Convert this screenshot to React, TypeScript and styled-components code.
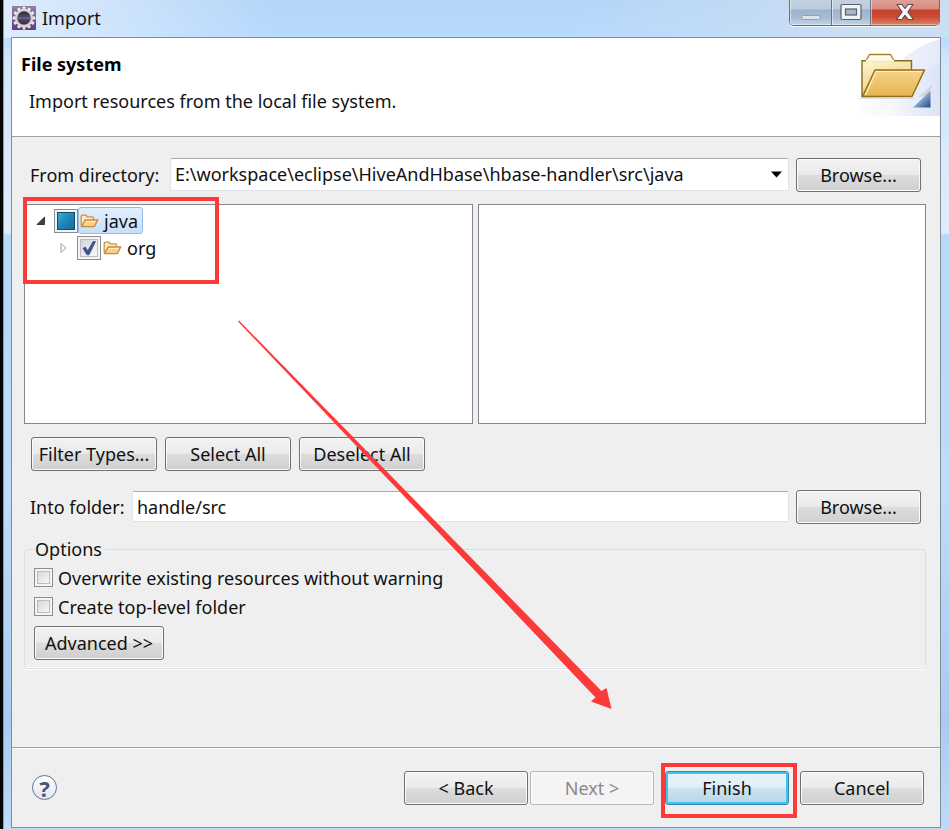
import React, { useEffect, useRef, useState } from "react";
import styled, { createGlobalStyle, css } from "styled-components";

const GlobalStyle = createGlobalStyle`
  * { box-sizing: border-box; }
  html, body { margin: 0; padding: 0; }
  body, button, input, select {
    font-family: "Noto Sans", "Open Sans", sans-serif;
    font-size: 18px;
    line-height: 24px;
    color: #111;
  }
`;

const Desktop = styled.div`
  min-height: 100vh;
  padding-left: 3px;
  background: #050505;
  display: flex;
`;

const Window = styled.div`
  position: relative;
  flex: 1;
  min-width: 0;
  display: flex;
  flex-direction: column;
  padding: 0 8px 0 7px;
  border-left: 1px solid #8d9cab;
  background:
    linear-gradient(100deg, rgba(235, 243, 252, 0.75) 0, rgba(235, 243, 252, 0.5) 100px, rgba(235, 243, 252, 0) 270px) top / 100% 38px no-repeat,
    linear-gradient(90deg, rgba(255, 255, 255, 0) 60%, rgba(206, 223, 240, 0.9) 92%) top / 100% 38px no-repeat,
    linear-gradient(180deg, #b3d5f8 0, #b9daff 38px, #d3e6fa 60px, #dfecfa 233px, #b7dafb 235px, #bcdcfb 500px, #a9cbef 720px, #bcdcfb 829px);
`;

const TitleBar = styled.header`
  height: 37px;
  display: flex;
  align-items: flex-start;
  justify-content: space-between;
`;

const Title = styled.div`
  display: flex;
  align-items: center;
  gap: 6px;
  height: 35px;
  padding-left: 1px;
`;

const Caption = styled.div`
  display: flex;
  height: 26px;
  margin-right: 1px;
  border: 1px solid #5d7086;
  border-top: 0;
  border-radius: 0 0 5px 5px;
  overflow: hidden;
  box-shadow: 0 1px 1px rgba(255, 255, 255, 0.8);
`;

const CaptionButton = styled.button<{ $w: number; $close?: boolean }>`
  width: ${(p) => p.$w}px;
  padding: 0;
  border: 0;
  border-left: 1px solid #63748a;
  box-shadow: inset 1px 0 0 rgba(255, 255, 255, 0.5), inset 0 -1px 0 rgba(255, 255, 255, 0.4);
  display: flex;
  align-items: center;
  justify-content: center;
  background: ${(p) =>
    p.$close
      ? "linear-gradient(#dfa198 0, #d98a7e 9px, #c4412c 10px, #cb4b32 17px, #d98468 25px)"
      : "linear-gradient(#c3d1e1 0, #bccbdd 9px, #9db2cb 10px, #a8bdd5 18px, #c2d5e9 25px)"};
  &:first-child { border-left: 0; }
`;

const Client = styled.main`
  flex: 1;
  display: flex;
  flex-direction: column;
  margin-bottom: 1px;
  border: 1px solid #7f8d9c;
  background: #efefef;
`;

const Banner = styled.section`
  height: 99px;
  display: flex;
  justify-content: space-between;
  background: #fff;
  border-bottom: 1px solid #a0a0a0;
`;

const BannerText = styled.div`
  padding: 14px 0 0 9px;
  h1 { margin: 0; font-size: 18px; line-height: 24px; font-weight: 700; color: #000; }
  p { margin: 13px 0 0 8px; }
`;

const Body = styled.div`
  flex: 1;
  padding: 21px 14px 20px 12px;
`;

const FieldRow = styled.div`
  display: flex;
  align-items: center;
  height: 33px;
  padding: 0 5px 0 6px;
`;

const FieldLabel = styled.label<{ $w: number }>`
  width: ${(p) => p.$w}px;
  flex: none;
  white-space: nowrap;
`;

const fieldBox = css`
  width: 100%;
  border: 1px solid #e0e3ea;
  border-top-color: #abadb3;
  border-radius: 2px;
  background: #fff;
  outline: 0;
`;

const ComboWrap = styled.div`
  position: relative;
  flex: 1;
  min-width: 0;
  margin-right: 7px;
  svg { position: absolute; right: 7px; top: 13px; pointer-events: none; }
`;

const Combo = styled.select`
  ${fieldBox}
  appearance: none;
  display: block;
  height: 33px;
  padding: 0 24px 2px 4px;
`;

const TextField = styled.input`
  ${fieldBox}
  flex: 1;
  min-width: 0;
  height: 31px;
  margin-right: 7px;
  padding: 0 4px;
`;

const Button = styled.button<{ $w: number; $primary?: boolean }>`
  width: ${(p) => p.$w}px;
  height: 34px;
  flex: none;
  padding: 0;
  white-space: nowrap;
  border: 1px solid #707070;
  border-radius: 3px;
  box-shadow: inset 0 0 0 1px #fbfbfb;
  background: linear-gradient(#f2f2f2 0, #ebebeb 48%, #dddddd 50%, #cfcfcf 100%);
  ${(p) =>
    p.$primary &&
    css`
      border-color: #3c7fb1;
      box-shadow: inset 0 0 0 2px #3fc3ef;
      background: linear-gradient(#eaf4fa 0, #dfeff7 48%, #cbe3ef 50%, #b7d6e6 100%);
    `}
  &:disabled {
    color: #8a8a8a;
    border-color: #b5b8ba;
    background: #f4f4f4;
  }
`;

const Panels = styled.div`
  display: grid;
  grid-template-columns: 1fr 1fr;
  gap: 5px;
  margin-top: 13px;
`;

const Panel = styled.div`
  position: relative;
  height: 220px;
  border: 1px solid #828790;
  background: #fff;
`;

const Tree = styled.ul`
  list-style: none;
  margin: 0;
  padding: 2px 0 0 11px;
  ul { padding: 0 0 0 23px; margin: 0; list-style: none; }
`;

const TreeRow = styled.div`
  display: flex;
  align-items: center;
  height: 27px;
`;

const Expander = styled.button`
  width: 18px;
  height: 24px;
  padding: 0;
  border: 0;
  background: none;
  display: flex;
  align-items: center;
`;

const TreeLabel = styled.label<{ $selected?: boolean }>`
  display: flex;
  align-items: center;
  gap: 5px;
  height: 27px;
  padding: 0 4px 0 1px;
  border: 1px solid ${(p) => (p.$selected ? "#98bce8" : "transparent")};
  border-radius: 3px;
  background: ${(p) => (p.$selected ? "linear-gradient(#e2effd, #c7dffb)" : "none")};
`;

const CheckHolder = styled.span<{ $size: number }>`
  position: relative;
  flex: none;
  width: ${(p) => p.$size}px;
  height: ${(p) => p.$size}px;
  svg { position: absolute; inset: 0; pointer-events: none; }
`;

const CheckInput = styled.input`
  appearance: none;
  display: block;
  width: 100%;
  height: 100%;
  margin: 0;
  border: 1px solid #8b8d90;
  box-shadow: inset 0 0 0 2px #f4f4f4, inset 0 0 0 3px #b9bdc3;
  background: linear-gradient(135deg, #cbcfd5, #f6f6f6 80%);
  &:indeterminate {
    box-shadow: inset 0 0 0 2px #f4f4f4, inset 0 0 0 3px #164a6a;
    background: linear-gradient(135deg, #45bbe0, #1d86b8 50%, #146590);
  }
`;

const ButtonRow = styled.div`
  display: flex;
  gap: 8px;
  margin: 13px 0 19px;
  padding-left: 7px;
`;

const Options = styled.fieldset`
  margin: 14px 0 0;
  min-width: 0;
  padding: 2px 9px 8px 9px;
  border: 1px solid #d5dfe5;
  border-radius: 4px;
  box-shadow: inset 0 -1px 0 #fff, 0 1px 0 #fff;
  legend { padding: 0 3px 0 1px; line-height: 24px; }
`;

const OptionRow = styled.label`
  display: flex;
  align-items: center;
  gap: 5px;
  width: fit-content;
  height: 29px;
`;

const AdvancedRow = styled.div`
  display: flex;
  padding-top: 5px;
`;

const Footer = styled.footer`
  display: flex;
  align-items: center;
  justify-content: space-between;
  height: 80px;
  padding: 0 16px 0 20px;
  border-top: 1px solid #a0a0a0;
  box-shadow: inset 0 1px 0 #fff;
`;

const HelpButton = styled.button`
  width: 25px;
  height: 25px;
  padding: 0;
  border: 1px solid #5f7595;
  border-radius: 50%;
  background: linear-gradient(#fff, #e2e5ea);
  color: #40587e;
  font-size: 22px;
  line-height: 22px;
  font-weight: 700;
`;

const Actions = styled.div`
  display: flex;
  gap: 11px;
`;

const StepPair = styled.div`
  display: flex;
  gap: 2px;
`;

const FinishSlot = styled.div`
  position: relative;
`;

const Highlight = styled.div<{ $x: number; $y: number; $w: number; $h: number }>`
  position: absolute;
  left: ${(p) => p.$x}px;
  top: ${(p) => p.$y}px;
  width: ${(p) => p.$w}px;
  height: ${(p) => p.$h}px;
  border: 4px solid #fd3a3a;
  pointer-events: none;
`;

const Arrow = styled.svg`
  position: absolute;
  left: 234px;
  top: 320px;
  pointer-events: none;
`;

function GearIcon() {
  return (
    <svg width="24" height="24" viewBox="0 0 24 24" aria-hidden="true">
      <defs>
        <linearGradient id="gearBg" x1="0" y1="0" x2="0" y2="1">
          <stop offset="0" stopColor="#93809f" />
          <stop offset="1" stopColor="#5b3f8c" />
        </linearGradient>
        <linearGradient id="gearCore" x1="0" y1="0" x2="0" y2="1">
          <stop offset="0" stopColor="#25203a" />
          <stop offset="0.5" stopColor="#564f70" />
          <stop offset="1" stopColor="#2c2148" />
        </linearGradient>
      </defs>
      <rect width="24" height="24" fill="url(#gearBg)" />
      {Array.from({ length: 12 }, (_, i) => (
        <rect key={i} x="10.5" y="0.6" width="3" height="4.5" rx="0.6" fill="#ece9e2" transform={`rotate(${i * 30} 12 12)`} />
      ))}
      <circle cx="12" cy="12" r="8" fill="url(#gearCore)" stroke="#d8d5cf" strokeWidth="2.4" />
      <path d="M5.5 12h13" stroke="#8a83a0" strokeWidth="0.7" />
    </svg>
  );
}

function SmallFolder() {
  return (
    <svg width="19" height="16" viewBox="0 0 19 16" aria-hidden="true">
      <path d="M1.2 12.6V3.4q0-1.2 1.2-1.2h3.5l1.6 1.7h5q1 0 1 1v2" fill="#fbe9bd" stroke="#c8944a" strokeWidth="1.3" />
      <path d="M1.4 13.6 5.2 7h12.6l-3.6 6.6z" fill="#f7d18c" stroke="#c58a3c" strokeWidth="1.3" strokeLinejoin="round" />
      <path d="M6 8.4h9.6" stroke="#fff1cf" strokeWidth="1" />
    </svg>
  );
}

function BannerArt() {
  return (
    <svg width="90" height="98" viewBox="0 0 90 98" aria-hidden="true">
      <defs>
        <linearGradient id="glow" x1="0" y1="0" x2="1" y2="0">
          <stop offset="0" stopColor="#fff" />
          <stop offset="1" stopColor="#dbe2f6" />
        </linearGradient>
        <linearGradient id="back" x1="0" y1="0" x2="0.4" y2="1">
          <stop offset="0" stopColor="#fff6cf" />
          <stop offset="1" stopColor="#ecca78" />
        </linearGradient>
        <linearGradient id="front" x1="0" y1="0" x2="0" y2="1">
          <stop offset="0" stopColor="#f6d48c" />
          <stop offset="1" stopColor="#e4b550" />
        </linearGradient>
        <linearGradient id="tri" x1="0" y1="0" x2="1" y2="1">
          <stop offset="0.35" stopColor="#a9c6e8" />
          <stop offset="1" stopColor="#1d468a" />
        </linearGradient>
      </defs>
      <path d="M4 78C22 55 48 12 90 1V78z" fill="url(#glow)" opacity="0.75" />
      <path d="M26 78C52 60 64 32 90 25V78z" fill="url(#glow)" opacity="0.8" />
      <path d="M7 60h60l16-14-5 11-16 4H10z" fill="#bda9b4" opacity="0.35" />
      <path d="M15.500 23.500 19.500 16.500h21l4 7z" fill="#fffdf0" stroke="#a98225" strokeWidth="1.300" />
      <path d="M12 58.500V22.800h49.500V58z" fill="url(#back)" stroke="#8a6b1c" strokeWidth="1.400" />
      <path d="M16 22.800h28" stroke="#fff6d5" strokeWidth="2" />
      <path d="M12.500 58.500 25 32h49.500L62 58.500z" fill="url(#front)" stroke="#94701a" strokeWidth="1.500" strokeLinejoin="round" />
      <path d="M15.500 57 26 33.500h46" fill="none" stroke="#fff0c2" strokeWidth="1.200" />
      <path d="M63 69.500 80.500 52.500v17z" fill="url(#tri)" />
    </svg>
  );
}

type CheckProps = {
  id: string;
  size: number;
  initial?: boolean;
  mixed?: boolean;
};

function Check({ id, size, initial = false, mixed = false }: CheckProps) {
  const ref = useRef<HTMLInputElement>(null);
  const [checked, setChecked] = useState(initial);
  useEffect(() => {
    if (ref.current) ref.current.indeterminate = mixed;
  }, [mixed]);
  return (
    <CheckHolder $size={size}>
      <CheckInput ref={ref} id={id} type="checkbox" checked={checked} onChange={(e) => setChecked(e.target.checked)} />
      {checked && (
        <svg width={size} height={size} viewBox="0 0 24 24" aria-hidden="true">
          <path d="M6 12.500 8.200 11l2.600 3.800L16 5.500h2.500L12 18.800h-2z" fill="#3d5295" stroke="#3d5295" strokeWidth="0.800" strokeLinejoin="round" />
        </svg>
      )}
    </CheckHolder>
  );
}

export default function App() {
  return (
    <>
      <GlobalStyle />
      <Desktop>
        <Window>
          <TitleBar>
            <Title>
              <GearIcon />
              <span>Import</span>
            </Title>
            <Caption>
              <CaptionButton $w={41} aria-label="Minimize">
                <svg width="20" height="24" viewBox="0 0 20 24">
                  <rect x="1" y="14.500" width="18" height="4" rx="1" fill="#dde3ea" stroke="#93a0b0" />
                </svg>
              </CaptionButton>
              <CaptionButton $w={39} aria-label="Maximize">
                <svg width="22" height="24" viewBox="0 0 22 24">
                  <rect x="1" y="3.500" width="20" height="15" rx="1.500" fill="#f1f3f6" stroke="#57606f" strokeWidth="1.200" />
                  <rect x="5.500" y="8" width="11" height="6" fill="#a7b9ce" stroke="#57606f" strokeWidth="1.200" />
                </svg>
              </CaptionButton>
              <CaptionButton $w={69} $close aria-label="Close">
                <svg width="20" height="24" viewBox="0 0 20 24">
                  <path d="M2 3.500h5l3 4 3-4h5l-5.200 7.500L18.500 18.500h-5.300L10 14.300l-3.200 4.200H1.500l5.700-7.500z" fill="#f6f6f6" stroke="#5a4a52" strokeWidth="1.100" strokeLinejoin="round" />
                </svg>
              </CaptionButton>
            </Caption>
          </TitleBar>

          <Client>
            <Banner>
              <BannerText>
                <h1>File system</h1>
                <p>Import resources from the local file system.</p>
              </BannerText>
              <BannerArt />
            </Banner>

            <Body>
              <FieldRow>
                <FieldLabel $w={140} htmlFor="from">From directory:</FieldLabel>
                <ComboWrap>
                  <Combo id="from">
                    <option>E:\workspace\eclipse\HiveAndHbase\hbase-handler\src\java</option>
                  </Combo>
                  <svg width="11" height="7" viewBox="0 0 11 7" aria-hidden="true">
                    <path d="M0 0.500h11L5.500 6.500z" fill="#000" />
                  </svg>
                </ComboWrap>
                <Button $w={125}>Browse...</Button>
              </FieldRow>

              <Panels>
                <Panel>
                  <Tree>
                    <li>
                      <TreeRow>
                        <Expander aria-label="Collapse java">
                          <svg width="10" height="10" viewBox="0 0 10 10">
                            <path d="M8.500 1v7.500H1z" fill="#404040" stroke="#222" strokeWidth="0.800" />
                          </svg>
                        </Expander>
                        <Check id="java" size={24} mixed />
                        <TreeLabel htmlFor="java" $selected>
                          <SmallFolder />
                          java
                        </TreeLabel>
                      </TreeRow>
                      <ul>
                        <li>
                          <TreeRow>
                            <Expander aria-label="Expand org">
                              <svg width="10" height="12" viewBox="0 0 10 12">
                                <path d="M2 1.500 7 6l-5 4.500z" fill="#fff" stroke="#a0a0a0" />
                              </svg>
                            </Expander>
                            <Check id="org" size={24} initial />
                            <TreeLabel htmlFor="org">
                              <SmallFolder />
                              org
                            </TreeLabel>
                          </TreeRow>
                        </li>
                      </ul>
                    </li>
                  </Tree>
                  <Highlight $x={-2} $y={-8} $w={196} $h={87} />
                </Panel>
                <Panel />
              </Panels>

              <ButtonRow>
                <Button $w={126}>Filter Types...</Button>
                <Button $w={126}>Select All</Button>
                <Button $w={126}>Deselect All</Button>
              </ButtonRow>

              <FieldRow>
                <FieldLabel $w={102} htmlFor="into">Into folder:</FieldLabel>
                <TextField id="into" type="text" defaultValue="handle/src" />
                <Button $w={125}>Browse...</Button>
              </FieldRow>

              <Options>
                <legend>Options</legend>
                <OptionRow htmlFor="overwrite">
                  <Check id="overwrite" size={19} />
                  Overwrite existing resources without warning
                </OptionRow>
                <OptionRow htmlFor="toplevel">
                  <Check id="toplevel" size={19} />
                  Create top-level folder
                </OptionRow>
                <AdvancedRow>
                  <Button $w={130}>Advanced &gt;&gt;</Button>
                </AdvancedRow>
              </Options>
            </Body>

            <Footer>
              <HelpButton aria-label="Help">?</HelpButton>
              <Actions>
                <StepPair>
                  <Button $w={124}>&lt; Back</Button>
                  <Button $w={124} disabled>Next &gt;</Button>
                </StepPair>
                <FinishSlot>
                  <Button $w={124} $primary>Finish</Button>
                  <Highlight $x={-4} $y={-8} $w={136} $h={55} />
                </FinishSlot>
                <Button $w={124}>Cancel</Button>
              </Actions>
            </Footer>
          </Client>

          <Arrow width="376" height="391" viewBox="0 0 376 391" aria-hidden="true">
            <path d="M0 1.500 1 0.500 363.500 371 368.500 368 373.500 389 353 381.500 357.500 377.500z" fill="#fd3a3a" />
          </Arrow>
        </Window>
      </Desktop>
    </>
  );
}
